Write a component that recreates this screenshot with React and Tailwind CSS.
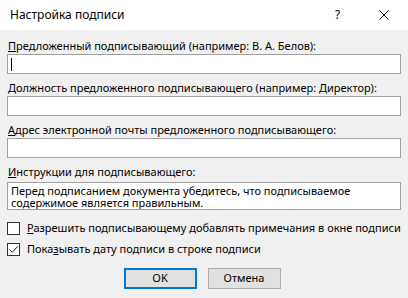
import React from "react";

function Label({ children, className = "" }) {
  return <div className={"h-[15px] leading-[15px] whitespace-nowrap " + className}>{children}</div>;
}

function Input({ caret = false }) {
  return (
    <div className="h-[20px] bg-white border border-[#a0a0a0] flex items-center pl-[3px]">
      {caret && <div className="w-px h-[13px] bg-black" />}
    </div>
  );
}

function Checkbox({ checked }) {
  return (
    <div className="w-[13px] h-[13px] border border-[#333333] bg-white flex items-center justify-center shrink-0">
      {checked && (
        <svg width="11" height="11" viewBox="0 0 11 11">
          <path d="M1.5 5.5 L4.2 8.3 L9.8 2.3" fill="none" stroke="#222" strokeWidth="1" />
        </svg>
      )}
    </div>
  );
}

export default function App() {
  return (
    <div className="w-[408px] h-[298px] bg-[#f0f0f0] text-black text-[11px] font-['Segoe_UI','Noto_Sans',sans-serif] overflow-hidden">
      <div className="h-[30px] bg-white flex items-center pl-[10px]">
        <div className="flex-1 text-[12px]">Настройка подписи</div>
        <div className="text-[12px] w-[10px] mr-[34px]">?</div>
        <svg width="10" height="10" viewBox="0 0 10 10" className="mr-[19px]">
          <path d="M0.5 0.5 L9.5 9.5 M9.5 0.5 L0.5 9.5" stroke="#111" strokeWidth="1" />
        </svg>
      </div>
      <div className="px-[7px] flex flex-col">
        <Label className="mt-[8px] mb-[1px] pl-px">
          <span className="underline">П</span>редложенный подписывающий (например: В. А. Белов):
        </Label>
        <Input caret />
        <Label className="mt-[6px] mb-[1px] pl-px">
          <span className="underline">Д</span>олжность предложенного подписывающего (например: Директор):
        </Label>
        <Input />
        <Label className="mt-[6px] mb-[1px] pl-px">
          <span className="underline">А</span>дрес электронной почты предложенного подписывающего:
        </Label>
        <Input />
        <Label className="mt-[6px] mb-[3px] pl-px">
          <span className="underline">И</span>нструкции для подписывающего:
        </Label>
        <div className="h-[28px] bg-white border border-[#a0a0a0] px-[3px] pt-[1px] leading-[12px] overflow-hidden">
          <div className="h-[13px] leading-[13px]">Перед подписанием документа убедитесь, что подписываемое</div>
          <div className="h-[12px] leading-[12px]">содержимое является правильным.</div>
        </div>
        <div className="flex items-center mt-[12px] h-[13px]">
          <Checkbox />
          <div className="ml-[7px] whitespace-nowrap">
            <span className="underline">Р</span>азрешить подписывающему добавлять примечания в окне подписи
          </div>
        </div>
        <div className="flex items-center mt-[8px] h-[13px]">
          <Checkbox checked />
          <div className="ml-[7px] whitespace-nowrap">
            Пока<span className="underline">з</span>ывать дату подписи в строке подписи
          </div>
        </div>
        <div className="flex justify-center gap-[11px] mt-[12px] pr-[4px]">
          <button className="w-[73px] h-[21px] bg-[#e1e1e1] border-2 border-[#0078d7] flex items-center justify-center">
            OK
          </button>
          <button className="w-[73px] h-[21px] bg-[#e1e1e1] border border-[#adadad] flex items-center justify-center">
            Отмена
          </button>
        </div>
      </div>
    </div>
  );
}
